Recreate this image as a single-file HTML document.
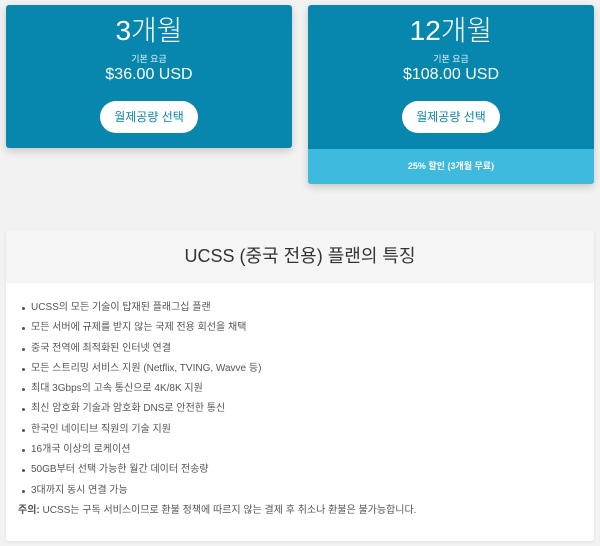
<!DOCTYPE html>
<html><head><meta charset="utf-8"><style>
*{margin:0;padding:0;box-sizing:border-box}
body{width:600px;height:546px;background:#f2f2f2;font-family:"Liberation Sans","Noto Sans CJK KR",sans-serif;position:relative;overflow:hidden}
.card{position:absolute;top:5px;width:286px;background:#0787ae;border-radius:3px;box-shadow:0 3px 8px rgba(0,0,0,.18);color:#fff;text-align:center;overflow:hidden}
.t{font-size:28px;font-weight:300;position:absolute;left:0;right:0;top:10px;line-height:32px}
.s{font-size:9px;position:absolute;left:0;right:0;top:47px;opacity:.9}
.p{font-size:16px;position:absolute;left:0;right:0;top:60px;line-height:20px}
.b{position:absolute;left:94px;top:96px;width:98px;height:32px;background:#fff;border-radius:16px;color:#0787ae;font-size:12px;line-height:32px}
.band{position:absolute;left:0;right:0;top:144px;height:35px;background:#3dbade;font-size:9px;font-weight:bold;line-height:35px}
.panel{position:absolute;left:6px;top:230px;width:588px;height:311px;background:#fff;border-radius:3px;box-shadow:0 1px 3px rgba(0,0,0,.08)}
.hd{height:53px;background:#f5f5f5;text-align:center;font-size:18px;line-height:53px;color:#333;border-radius:3px 3px 0 0}
ul{position:absolute;left:16px;top:71px;list-style:none}
li{font-size:10px;color:#555;height:20.3px;line-height:14px;position:relative;padding-left:9px}
li:before{content:"";position:absolute;left:0;top:6px;width:3px;height:3px;border-radius:50%;background:#555}
.n{position:absolute;left:12px;top:271px;font-size:10px;color:#555}
</style></head><body>
<div class="card" style="left:6px;height:143px">
<div class="t">3개월</div><div class="s">기본 요금</div><div class="p">$36.00 USD</div><div class="b">월제공량 선택</div></div>
<div class="card" style="left:308px;height:179px">
<div class="t">12개월</div><div class="s">기본 요금</div><div class="p">$108.00 USD</div><div class="b">월제공량 선택</div>
<div class="band">25% 할인 (3개월 무료)</div></div>
<div class="panel"><div class="hd">UCSS (중국 전용) 플랜의 특징</div>
<ul>
<li>UCSS의 모든 기술이 탑재된 플래그십 플랜</li>
<li>모든 서버에 규제를 받지 않는 국제 전용 회선을 채택</li>
<li>중국 전역에 최적화된 인터넷 연결</li>
<li>모든 스트리밍 서비스 지원 (Netflix, TVING, Wavve 등)</li>
<li>최대 3Gbps의 고속 통신으로 4K/8K 지원</li>
<li>최신 암호화 기술과 암호화 DNS로 안전한 통신</li>
<li>한국인 네이티브 직원의 기술 지원</li>
<li>16개국 이상의 로케이션</li>
<li>50GB부터 선택 가능한 월간 데이터 전송량</li>
<li>3대까지 동시 연결 가능</li>
</ul>
<div class="n"><b>주의:</b> UCSS는 구독 서비스이므로 환불 정책에 따르지 않는 결제 후 취소나 환불은 불가능합니다.</div>
</div>
</body></html>
